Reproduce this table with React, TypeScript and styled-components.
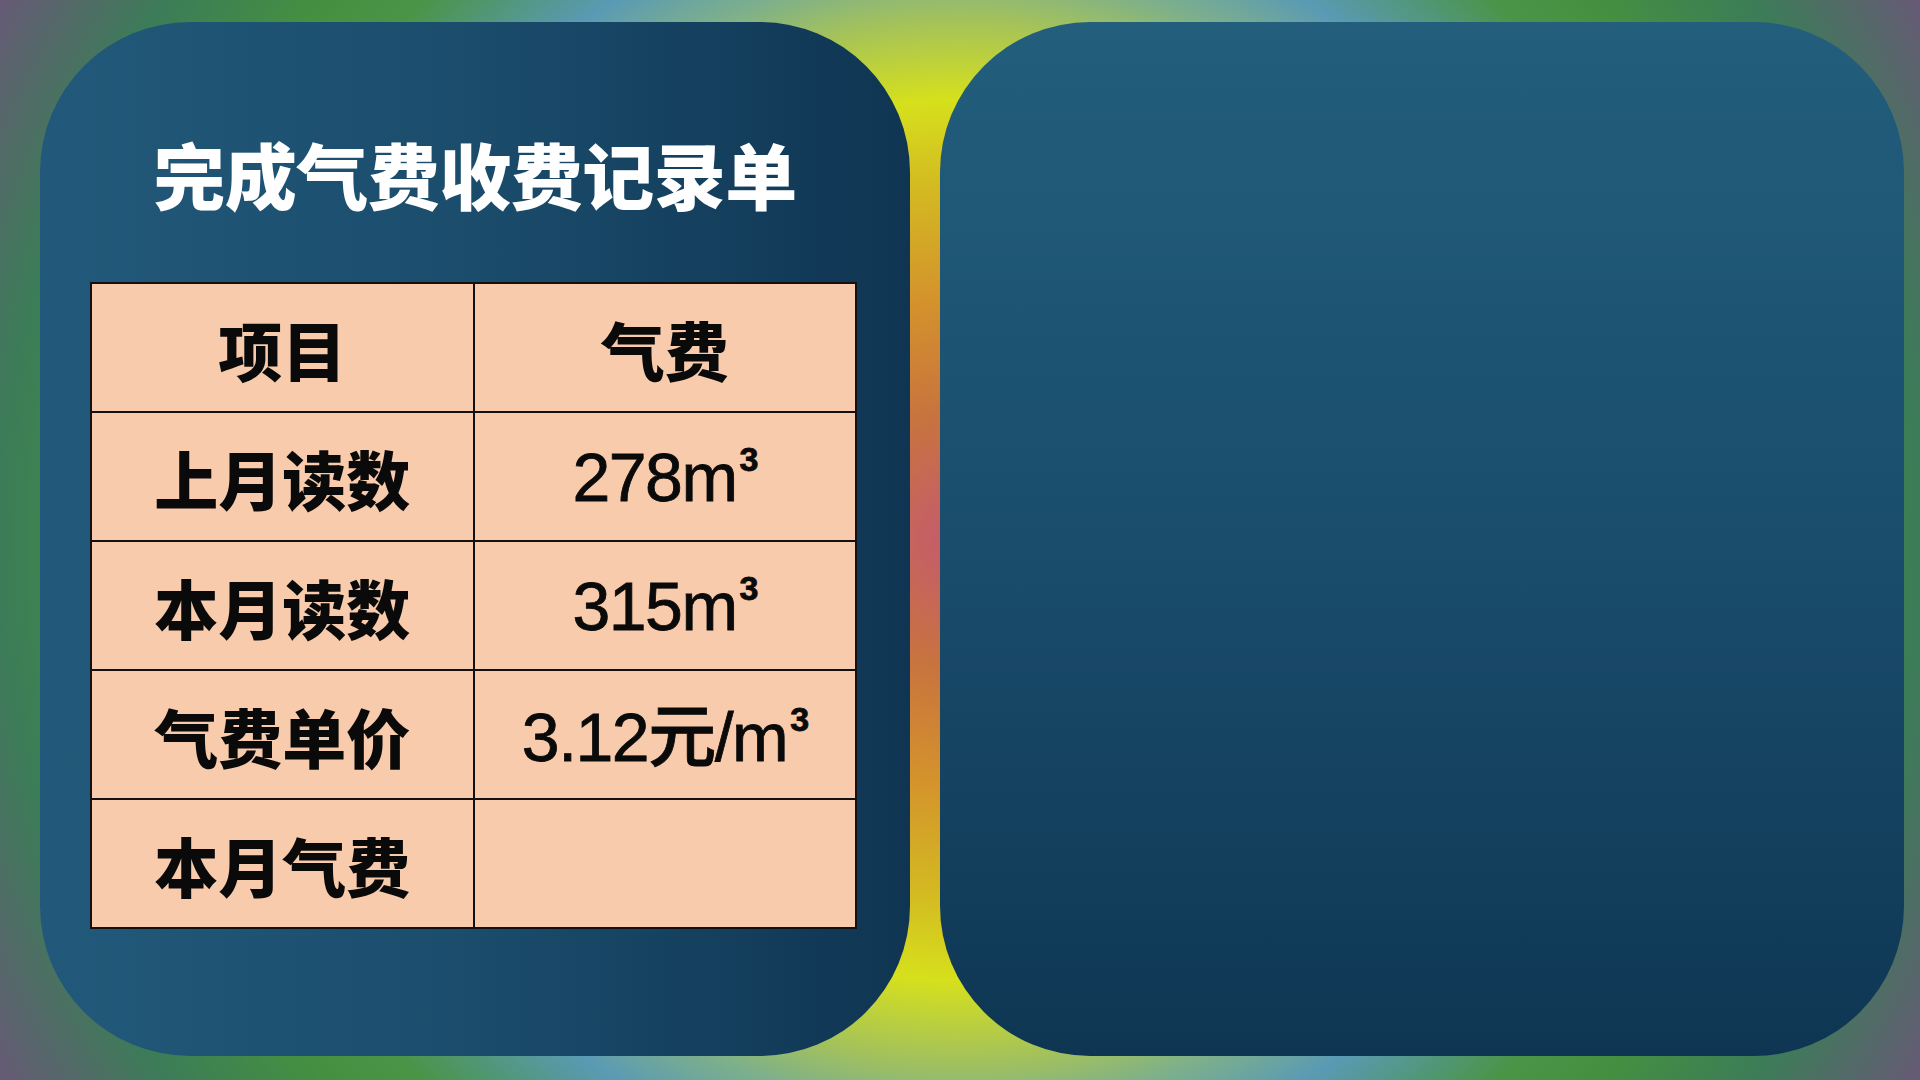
import React from "react";
import styled, { createGlobalStyle } from "styled-components";

const GlobalStyle = createGlobalStyle`
  html, body {
    margin: 0;
    padding: 0;
  }
  body {
    width: 1920px;
    height: 1080px;
    overflow: hidden;
    background: radial-gradient(
      circle at 50% 50%,
      #c45a70 0px,
      #c8743e 130px,
      #d4922c 240px,
      #d3b822 350px,
      #d6e01c 440px,
      #a4c25a 520px,
      #7eb08a 570px,
      #5a9ab4 640px,
      #4a9448 760px,
      #459040 830px,
      #3c7c58 960px,
      #6a5878 1110px
    );
    font-family: "Liberation Sans", "Noto Sans CJK SC", sans-serif;
  }
`;

const Stage = styled.div`
  box-sizing: border-box;
  width: 1920px;
  height: 1080px;
  display: flex;
  gap: 30px;
  padding: 22px 16px 24px 40px;
`;

const LeftPanel = styled.section`
  width: 870px;
  flex: none;
  border-radius: 150px;
  background: linear-gradient(90deg, #22597a 0%, #1b4c6c 50%, #0f3552 100%);
  display: flex;
  flex-direction: column;
  align-items: center;
  padding-top: 115px;
  box-sizing: border-box;
`;

const RightPanel = styled.section`
  flex: 1;
  border-radius: 150px;
  background: linear-gradient(180deg, #235e7d 0%, #1a4d6c 50%, #0e3653 100%);
`;

const Title = styled.h1`
  margin: 0;
  font-family: "Noto Sans CJK SC", "Liberation Sans", sans-serif;
  font-weight: 900;
  font-size: 72px;
  line-height: 72px;
  color: #ffffff;
  letter-spacing: -0.5px;
`;

const Table = styled.table`
  margin-top: 73px;
  margin-right: 3px;
  width: 767px;
  border-collapse: collapse;
  background: #f8cbad;
  table-layout: fixed;
`;

const Row = styled.tr`
  height: 129px;
`;

const Cell = styled.td<{ $num?: boolean }>`
  border: 2px solid #141010;
  padding: 0;
  text-align: center;
  vertical-align: middle;
  color: #0a0a0a;
  font-family: ${(p) =>
    p.$num
      ? `"Liberation Sans", "Noto Sans CJK SC", sans-serif`
      : `"Noto Sans CJK SC", "Liberation Sans", sans-serif`};
  font-weight: ${(p) => (p.$num ? 400 : 800)};
  font-size: ${(p) => (p.$num ? "68px" : "64px")};
  line-height: 1;
  letter-spacing: ${(p) => (p.$num ? "-1.5px" : "0")};
  -webkit-text-stroke: ${(p) => (p.$num ? "0.8px #0a0a0a" : "0")};
`;

const Sup = styled.span`
  font-size: 34px;
  font-weight: 700;
  vertical-align: 30px;
  line-height: 0;
  margin-left: 3px;
`;

const Unit = styled.span`
  font-family: "Noto Sans CJK SC", sans-serif;
  font-weight: 500;
`;

const rows: { label: string; value: React.ReactNode }[] = [
  {
    label: "上月读数",
    value: (
      <>
        278m<Sup>3</Sup>
      </>
    ),
  },
  {
    label: "本月读数",
    value: (
      <>
        315m<Sup>3</Sup>
      </>
    ),
  },
  {
    label: "气费单价",
    value: (
      <>
        3.12<Unit>元</Unit>/m<Sup>3</Sup>
      </>
    ),
  },
  { label: "本月气费", value: "" },
];

export default function App() {
  return (
    <>
      <GlobalStyle />
      <Stage>
        <LeftPanel>
          <Title>完成气费收费记录单</Title>
          <Table>
            <tbody>
              <Row>
                <Cell>项目</Cell>
                <Cell>气费</Cell>
              </Row>
              {rows.map((r) => (
                <Row key={r.label}>
                  <Cell>{r.label}</Cell>
                  <Cell $num>{r.value}</Cell>
                </Row>
              ))}
            </tbody>
          </Table>
        </LeftPanel>
        <RightPanel />
      </Stage>
    </>
  );
}
